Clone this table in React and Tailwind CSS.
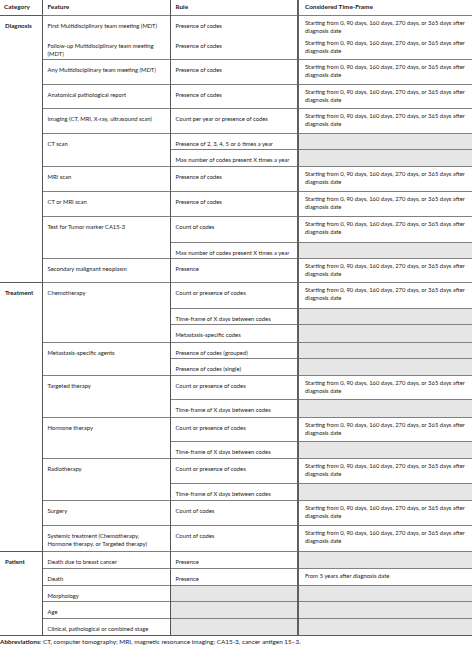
const TF = ["Starting from 0, 90 days, 160 days, 270 days, or 365 days after", "diagnosis date"];

const groups = [
  {
    cat: "Diagnosis",
    features: [
      { f: ["First Multidisciplinary team meeting (MDT)"], rules: [[["Presence of codes"], TF, 21]], noBottom: true },
      { f: ["Follow-up Multidisciplinary team meeting", "(MDT)"], rules: [[["Presence of codes"], TF, 23]], noTop: true },
      { f: ["Any Multidisciplinary team meeting (MDT)"], rules: [[["Presence of codes"], TF, 25]] },
      { f: ["Anatomical pathological report"], rules: [[["Presence of codes"], TF, 24]] },
      { f: ["Imaging (CT, MRI, X-ray, ultrasound scan)"], rules: [[["Count per year or presence of codes"], TF, 25]] },
      {
        f: ["CT scan"],
        rules: [
          [["Presence of 2, 3, 4, 5 or 6 times a year"], null, 16],
          [["Max number of codes present X times a year"], null, 17],
        ],
      },
      { f: ["MRI scan"], rules: [[["Presence of codes"], TF, 25]] },
      { f: ["CT or MRI scan"], rules: [[["Presence of codes"], TF, 25]] },
      {
        f: ["Test for Tumor marker CA15-3"],
        rules: [
          [["Count of codes"], TF, 26],
          [["Max number of codes present X times a year"], null, 16],
        ],
      },
      { f: ["Secondary malignant neoplasm"], rules: [[["Presence"], TF, 24]] },
    ],
  },
  {
    cat: "Treatment",
    features: [
      {
        f: ["Chemotherapy"],
        rules: [
          [["Count or presence of codes"], TF, 26],
          [["Time-frame of X days between codes"], null, 16],
          [["Metastasis-specific codes"], null, 18],
        ],
      },
      {
        f: ["Metastasis-specific agents"],
        rules: [
          [["Presence of codes (grouped)"], null, 16],
          [["Presence of codes (single)"], null, 17],
        ],
      },
      {
        f: ["Targeted therapy"],
        rules: [
          [["Count or presence of codes"], TF, 24],
          [["Time-frame of X days between codes"], null, 18],
        ],
      },
      {
        f: ["Hormone therapy"],
        rules: [
          [["Count or presence of codes"], TF, 24],
          [["Time-frame of X days between codes"], null, 17],
        ],
      },
      {
        f: ["Radiotherapy"],
        rules: [
          [["Count or presence of codes"], TF, 25],
          [["Time-frame of X days between codes"], null, 17],
        ],
      },
      { f: ["Surgery"], rules: [[["Count of codes"], TF, 25]] },
      {
        f: ["Systemic treatment (Chemotherapy,", "Hormone therapy, or Targeted therapy)"],
        rules: [[["Count of codes"], TF, 26]],
      },
    ],
  },
  {
    cat: "Patient",
    features: [
      { f: ["Death due to breast cancer"], rules: [[["Presence"], null, 17]] },
      { f: ["Death"], rules: [[["Presence"], ["From 5 years after diagnosis date"], 17]] },
      { f: ["Morphology"], rules: [[null, null, 16]] },
      { f: ["Age"], rules: [[null, null, 17]] },
      { f: ["Clinical, pathological or combined stage"], rules: [[null, null, 17]] },
    ],
  },
];

const heights = {
  15: "h-[15px]",
  16: "h-[16px]",
  17: "h-[17px]",
  18: "h-[18px]",
  21: "h-[21px]",
  23: "h-[23px]",
  24: "h-[24px]",
  25: "h-[25px]",
  26: "h-[26px]",
};

function Lines({ lines }) {
  return lines.map((l, i) => (
    <div key={i} className="whitespace-nowrap">
      {l}
    </div>
  ));
}

function App() {
  const rows = [];
  groups.forEach((g, gi) => {
    const total = g.features.reduce((n, ft) => n + ft.rules.length, 0);
    g.features.forEach((ft, fi) => {
      ft.rules.forEach((r, ri) => {
        const [rule, time, h] = r;
        const first = ri === 0;
        const lineTop = first ? !ft.noTop : true;
        const topCls = lineTop ? "border-t border-t-[#808080]" : "border-t-0";
        rows.push(
          <tr key={`${gi}-${fi}-${ri}`} className={heights[h]}>
            {fi === 0 && ri === 0 && (
              <td
                rowSpan={total}
                className="align-top pl-[5px] pt-[6px] font-bold text-[6.2px] border-t border-t-[#5a5a5a] border-r border-r-[#555]"
              >
                {g.cat}
              </td>
            )}
            {first && (
              <td rowSpan={ft.rules.length} className={`align-top pl-[5px] pt-[6px] border-r border-r-[#555] ${topCls}`}>
                <Lines lines={ft.f} />
              </td>
            )}
            <td
              className={`align-top pl-[5px] pt-[6px] border-r-2 border-r-[#5f5f5f] ${topCls} ${rule ? "" : "bg-[#e6e6e6]"}`}
            >
              {rule && <Lines lines={rule} />}
            </td>
            <td className={`align-top pl-[6px] pt-[3px] ${topCls} ${time ? "" : "bg-[#e6e6e6]"}`}>
              {time && <Lines lines={time} />}
            </td>
          </tr>
        );
      });
    });
  });

  return (
    <div className="w-[474px] h-[645px] bg-white overflow-hidden text-[#1c1a1b] font-['Lato',sans-serif]">
      <table className="w-[472px] table-fixed border-collapse text-[5.85px] leading-[8px]">
        <colgroup>
          <col className="w-[42px]" />
          <col className="w-[128px]" />
          <col className="w-[128px]" />
          <col className="w-[174px]" />
        </colgroup>
        <thead>
          <tr className="h-[15px] font-bold text-[6.4px]">
            <td className="align-middle pl-[4px] border-r border-r-[#555]">Category</td>
            <td className="align-middle pl-[5px] border-r border-r-[#555]">Feature</td>
            <td className="align-middle pl-[5px] border-r-2 border-r-[#5f5f5f]">Rule</td>
            <td className="align-middle pl-[6px]">Considered Time-Frame</td>
          </tr>
        </thead>
        <tbody className="border-b border-b-[#5a5a5a]">{rows}</tbody>
      </table>
      <div className="mt-[2px] text-[6.4px] leading-[8px] whitespace-nowrap">
        <span className="font-bold">Abbreviations</span>: CT, computer tomography; MRI, magnetic resonance imaging; CA15-3,
        cancer antigen 15–3.
      </div>
    </div>
  );
}

export default App;
